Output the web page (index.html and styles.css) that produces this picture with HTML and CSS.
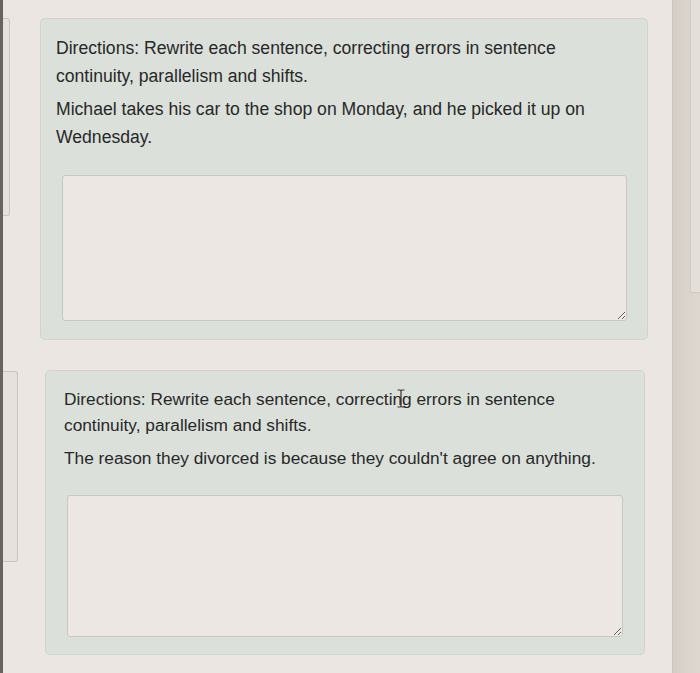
FILE: index.html
```html
<!DOCTYPE html>
<html lang="en">
<head>
<meta charset="utf-8">
<title>Directions</title>
<link rel="stylesheet" href="styles.css">
</head>
<body>
<div class="screen">
  <div class="edge"></div>
  <div class="left-rail">
    <div class="stub stub-a"></div>
    <div class="stub stub-b"></div>
  </div>
  <main class="main">
    <section class="card card-a">
      <p class="line">Directions: Rewrite each sentence, correcting errors in sentence continuity, parallelism and shifts.</p>
      <p class="line">Michael takes his car to the shop on Monday, and he picked it up on Wednesday.</p>
      <textarea class="answer"></textarea>
    </section>
    <section class="card card-b">
      <p class="line">Directions: Rewrite each sentence, correcting errors in sentence continuity, parallelism and shifts.</p>
      <p class="line">The reason they divorced is because they couldn't agree on anything.</p>
      <textarea class="answer"></textarea>
      <svg class="ibeam" width="10" height="19" viewBox="0 0 10 19" aria-hidden="true">
        <path d="M1.5 1 H4 Q5 1 5 2.5 V16.5 Q5 18 4 18 H1.5 M8.5 1 H6 Q5 1 5 2.5 M5 16.5 Q5 18 6 18 H8.5" fill="none" stroke="#333" stroke-width="1.2"/>
      </svg>
    </section>
  </main>
  <div class="right-rail">
    <div class="band">
      <div class="panel"></div>
    </div>
  </div>
</div>
</body>
</html>
```

FILE: styles.css
```css
html, body {
  margin: 0;
  padding: 0;
}
body {
  background: #ebe6e1;
  font-family: "Liberation Sans", Arial, sans-serif;
  color: #282828;
}
.screen {
  display: flex;
  width: 700px;
  height: 673px;
  overflow: hidden;
  background: #ebe6e1;
}
.edge {
  width: 3px;
  flex: none;
  background: #68635e;
}
.left-rail {
  width: 37px;
  flex: none;
  display: flex;
  flex-direction: column;
}
.stub {
  background: #e6e1dc;
  border: 1px solid #c9c4bf;
  border-left: none;
  border-radius: 0 3px 3px 0;
}
.stub-a {
  margin-top: 18px;
  width: 6px;
  height: 196px;
}
.stub-b {
  margin-top: 155px;
  width: 14px;
  height: 189px;
}
.main {
  width: 628px;
  flex: none;
  display: flex;
  flex-direction: column;
  padding-top: 18px;
}
.card {
  position: relative;
  box-sizing: border-box;
  display: flex;
  flex-direction: column;
  background: #dbe0db;
  border: 1px solid #cfd4cf;
  border-radius: 5px;
}
.line {
  margin: 0;
}
.answer {
  box-sizing: border-box;
  display: block;
  background: #ece7e2;
  border: 1px solid #c5c8c3;
  border-radius: 3px;
  padding: 6px;
  margin: 0;
  font: inherit;
}
.card-a {
  width: 608px;
  height: 322px;
  padding: 15px 15px 0 15px;
  font-size: 17.6px;
  line-height: 28px;
}
.card-a .line + .line {
  margin-top: 5px;
}
.card-a .answer {
  margin-top: 24px;
  margin-left: 6px;
  width: 565px;
  height: 146px;
}
.card-b {
  margin-top: 30px;
  margin-left: 5px;
  width: 600px;
  height: 285px;
  padding: 15px 18px 0 18px;
  font-size: 17.3px;
  line-height: 26px;
}
.card-b .line + .line {
  margin-top: 7px;
}
.card-b .answer {
  margin-top: 24px;
  margin-left: 3px;
  width: 556px;
  height: 142px;
}
.ibeam {
  position: absolute;
  left: 350px;
  top: 18px;
}
.right-rail {
  flex: 1;
  display: flex;
  justify-content: flex-end;
}
.band {
  width: 27px;
  background: linear-gradient(to right, #d5cec7, #dad4cd 50%, #ddd7d0);
  border-left: 1px solid #cdc6bf;
}
.panel {
  margin-left: 17px;
  height: 292px;
  background: #e4dfd9;
  border-left: 1px solid #d0cac3;
  border-bottom: 1px solid #d0cac3;
}
```
